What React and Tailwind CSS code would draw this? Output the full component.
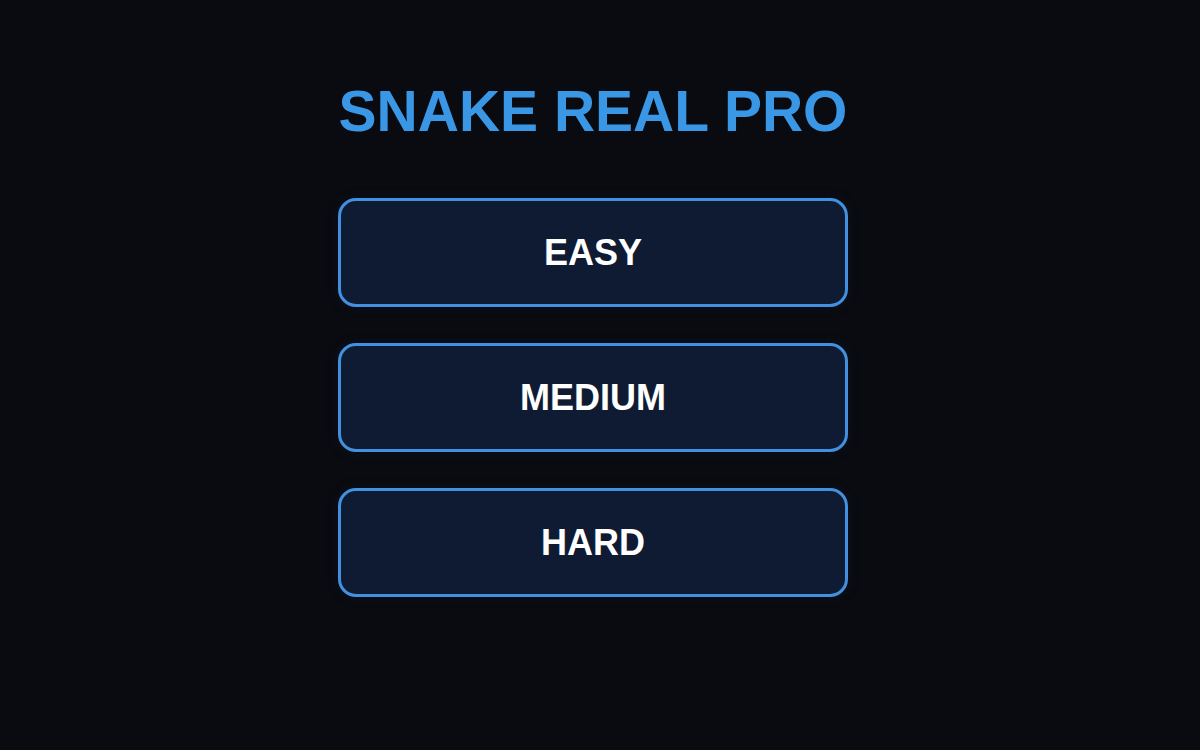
import React from 'react';

const levels = ['EASY', 'MEDIUM', 'HARD'];

export default function App() {
  return (
    <div
      className="min-h-screen w-full bg-[#0a0b10] flex flex-col items-center pt-[83px] pr-[14px]"
      style={{ fontFamily: '"Liberation Sans", Arial, sans-serif' }}
    >
      <h1 className="text-[57px] leading-none font-bold text-[#3a97e6] tracking-normal">
        SNAKE REAL PRO
      </h1>
      <div className="mt-[58px] flex flex-col gap-[36px]">
        {levels.map(level => (
          <button
            key={level}
            className="w-[510px] h-[109px] rounded-[18px] border-[3px] border-[#4291e0] bg-[#0e1b33] text-white text-[36px] font-bold flex items-center justify-center shadow-[0_0_12px_rgba(20,40,80,0.25)]"
          >
            {level}
          </button>
        ))}
      </div>
    </div>
  );
}
